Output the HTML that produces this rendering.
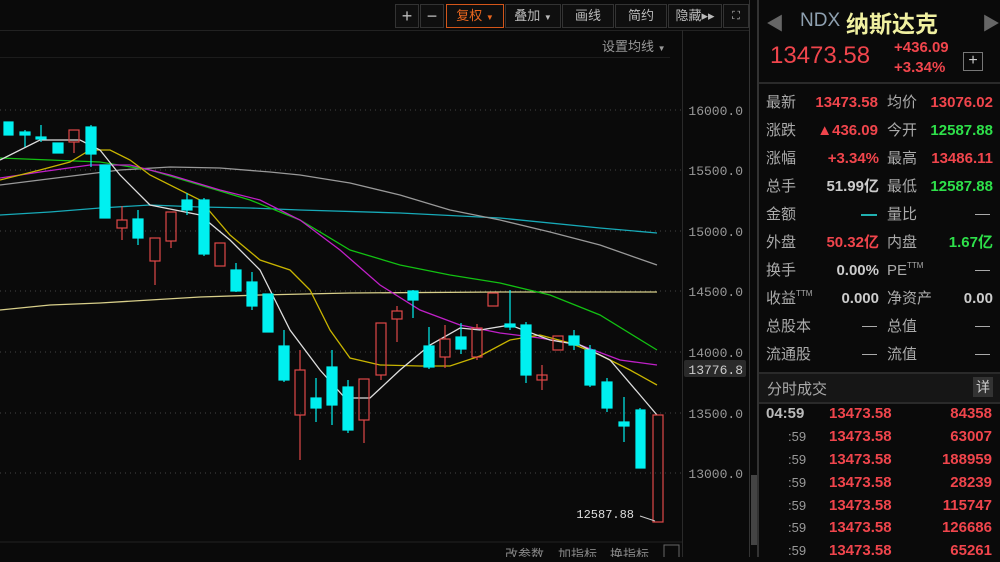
<!DOCTYPE html>
<html><head><meta charset="utf-8"><style>
*{margin:0;padding:0;box-sizing:border-box}
body{width:1000px;height:557px;background:#0a0a0a;overflow:hidden;position:relative;font-family:"Liberation Sans","Noto Sans CJK SC",sans-serif;color:#bbb}
.abs{position:absolute}
.tb{position:absolute;top:4px;height:24px;border:1px solid #333;background:#0f0f0f;color:#bbb;font-size:13px;line-height:22px;text-align:center}
.lbl{position:absolute;left:766px;font-size:15px;color:#aaa;line-height:20px;height:20px}
.val{position:absolute;font-size:15px;font-weight:bold;text-align:right;line-height:20px;height:20px;font-family:"Liberation Sans","Noto Sans CJK SC",sans-serif}
.r{color:#f0454c}.g{color:#2ee04a}.w{color:#ccc}
.tr{position:absolute;left:760px;width:232px;height:22px;font-size:15px;font-weight:bold;line-height:22px}
.tr span{line-height:22px}
.sup{font-size:8px;line-height:0;position:relative;top:-7px;vertical-align:baseline}
</style></head><body>
<div class="tb" style="left:395px;width:24px;font-size:18px">+</div>
<div class="tb" style="left:420px;width:24px;font-size:18px">−</div>
<div class="tb" style="left:446px;width:58px;border-color:#d4561a;color:#e8651e">复权 <span style="font-size:8px">▼</span></div>
<div class="tb" style="left:505px;width:56px">叠加 <span style="font-size:8px">▼</span></div>
<div class="tb" style="left:562px;width:52px">画线</div>
<div class="tb" style="left:615px;width:52px">简约</div>
<div class="tb" style="left:668px;width:54px">隐藏▸▸</div>
<div class="tb" style="left:723px;width:26px;font-size:11px">⛶</div>
<div class="abs" style="left:0;top:30px;width:750px;height:1px;background:#222"></div>
<div class="abs" style="left:0;top:57px;width:670px;height:1px;background:#1c1c1c"></div>
<div class="abs" style="left:602px;top:36px;font-size:13px;color:#999">设置均线 <span style="font-size:8px">▼</span></div>
<div class="abs" style="left:682px;top:30px;width:1px;height:527px;background:#2a2a2a"></div>
<div class="abs" style="left:749px;top:0;width:1px;height:557px;background:#333"></div>
<div class="abs" style="left:751px;top:475px;width:7px;height:70px;background:#444"></div>
<div class="abs" style="left:757px;top:0;width:2px;height:557px;background:#333"></div>
<svg class="abs" style="left:0;top:0" width="750" height="557">
<g stroke="#444" stroke-dasharray="1,4" stroke-width="1">
<line x1="0" y1="110" x2="685" y2="110"/><line x1="0" y1="170" x2="685" y2="170"/><line x1="0" y1="231" x2="685" y2="231"/><line x1="0" y1="291" x2="685" y2="291"/><line x1="0" y1="352" x2="685" y2="352"/><line x1="0" y1="413" x2="685" y2="413"/><line x1="0" y1="473" x2="685" y2="473"/>
</g>
<g font-family="Liberation Mono,monospace" font-size="13" fill="#999" text-anchor="end">
<text x="743" y="115">16000.0</text><text x="743" y="175">15500.0</text><text x="743" y="236">15000.0</text><text x="743" y="296">14500.0</text><text x="743" y="357">14000.0</text><text x="743" y="418">13500.0</text><text x="743" y="478">13000.0</text>
</g>
<rect x="684" y="360" width="62" height="17" rx="2" fill="#2a2a2a"/>
<text x="743" y="374" font-family="Liberation Mono,monospace" font-size="13" fill="#ccc" text-anchor="end">13776.8</text>
<g fill="none" stroke-width="1.3">
<polyline stroke="#d8cf8a" points="0,310 50,305 100,303 150,300 200,297 260,295 350,293 500,292 657,292"/>
<polyline stroke="#17aab8" points="0,215 50,212 100,208 150,205 200,207 250,208 300,210 400,213 500,218 600,228 657,233"/>
<polyline stroke="#999" points="0,185 40,180 80,175 120,170 170,167 220,168 270,172 300,175 350,183 400,195 450,210 500,220 550,232 600,245 657,265"/>
<polyline stroke="#12c012" points="0,158 50,160 100,162 150,170 200,185 250,200 300,220 350,250 400,265 450,275 500,283 550,295 600,315 657,350"/>
<polyline stroke="#c020c8" points="0,178 40,172 90,165 130,165 170,175 220,190 260,200 300,220 340,250 380,285 420,310 460,325 500,333 540,338 580,345 620,360 657,365"/>
<polyline stroke="#c8b400" points="0,180 40,170 70,162 90,150 110,150 130,160 150,175 200,200 230,235 260,260 290,270 310,290 330,330 350,358 380,365 420,366 450,366 480,356 510,340 540,335 570,343 600,355 630,370 657,385"/>
<polyline stroke="#ddd" points="0,160 40,140 80,140 100,150 120,175 150,205 200,215 230,240 260,270 290,330 320,370 345,398 370,398 400,370 430,345 460,328 480,330 510,325 550,340 580,345 610,360 640,395 657,415"/>
</g>
<g stroke-width="1.2">
<g fill="#00f0f0" stroke="#00f0f0">
<rect x="4" y="122" width="9" height="13"/><line x1="25" y1="130" x2="25" y2="147"/><rect x="20" y="132" width="10" height="3"/>
<line x1="41" y1="125" x2="41" y2="142"/><rect x="36" y="137" width="10" height="2"/>
<rect x="53" y="143" width="10" height="10"/><line x1="91" y1="125" x2="91" y2="167"/><rect x="86" y="127" width="10" height="27"/>
<rect x="100" y="165" width="10" height="53"/><line x1="138" y1="210" x2="138" y2="245"/><rect x="133" y="219" width="10" height="19"/>
<line x1="187" y1="193" x2="187" y2="215"/><rect x="182" y="200" width="10" height="10"/>
<line x1="204" y1="198" x2="204" y2="256"/><rect x="199" y="200" width="10" height="54"/>
<line x1="236" y1="263" x2="236" y2="292"/><rect x="231" y="270" width="10" height="21"/>
<line x1="252" y1="272" x2="252" y2="310"/><rect x="247" y="282" width="10" height="24"/>
<rect x="263" y="294" width="10" height="38"/><line x1="284" y1="330" x2="284" y2="382"/><rect x="279" y="346" width="10" height="34"/>
<line x1="316" y1="378" x2="316" y2="422"/><rect x="311" y="398" width="10" height="10"/>
<line x1="332" y1="350" x2="332" y2="425"/><rect x="327" y="367" width="10" height="38"/>
<line x1="348" y1="380" x2="348" y2="433"/><rect x="343" y="387" width="10" height="43"/>
<line x1="413" y1="290" x2="413" y2="318"/><rect x="408" y="291" width="10" height="9"/>
<line x1="429" y1="327" x2="429" y2="369"/><rect x="424" y="346" width="10" height="21"/>
<line x1="461" y1="323" x2="461" y2="354"/><rect x="456" y="337" width="10" height="12"/>
<line x1="510" y1="290" x2="510" y2="330"/><rect x="505" y="324" width="10" height="3"/>
<line x1="526" y1="322" x2="526" y2="383"/><rect x="521" y="325" width="10" height="50"/>
<line x1="574" y1="330" x2="574" y2="350"/><rect x="569" y="336" width="10" height="9"/>
<line x1="590" y1="345" x2="590" y2="387"/><rect x="585" y="350" width="10" height="35"/>
<line x1="607" y1="378" x2="607" y2="412"/><rect x="602" y="382" width="10" height="26"/>
<line x1="624" y1="397" x2="624" y2="442"/><rect x="619" y="422" width="10" height="4"/>
<line x1="640" y1="408" x2="640" y2="468"/><rect x="636" y="410" width="9" height="58"/>
</g>
<g fill="none" stroke="#e04848">
<rect x="69" y="130" width="10" height="12"/><line x1="74" y1="142" x2="74" y2="153"/>
<rect x="117" y="220" width="10" height="8"/><line x1="122" y1="206" x2="122" y2="220"/><line x1="122" y1="228" x2="122" y2="240"/>
<rect x="150" y="238" width="10" height="23"/><line x1="155" y1="261" x2="155" y2="285"/>
<rect x="166" y="212" width="10" height="29"/><line x1="171" y1="241" x2="171" y2="248"/>
<rect x="215" y="243" width="10" height="23"/>
<rect x="295" y="370" width="10" height="45"/><line x1="300" y1="350" x2="300" y2="370"/><line x1="300" y1="415" x2="300" y2="460"/>
<rect x="359" y="379" width="10" height="41"/><line x1="364" y1="420" x2="364" y2="443"/>
<rect x="376" y="323" width="10" height="52"/><line x1="381" y1="375" x2="381" y2="380"/>
<rect x="392" y="311" width="10" height="8"/><line x1="397" y1="306" x2="397" y2="311"/><line x1="397" y1="319" x2="397" y2="342"/>
<rect x="440" y="339" width="10" height="18"/><line x1="445" y1="325" x2="445" y2="339"/><line x1="445" y1="357" x2="445" y2="368"/>
<rect x="472" y="328" width="10" height="29"/><line x1="477" y1="324" x2="477" y2="328"/><line x1="477" y1="357" x2="477" y2="360"/>
<rect x="488" y="293" width="10" height="13"/>
<rect x="537" y="375" width="10" height="5"/><line x1="542" y1="365" x2="542" y2="390"/>
<rect x="553" y="336" width="10" height="14"/>
<rect x="653" y="415" width="10" height="107"/>
</g>
</g>
<line x1="640" y1="516" x2="655" y2="521" stroke="#ccc"/>
<text x="634" y="518" font-family="Liberation Mono,monospace" font-size="12" fill="#ddd" text-anchor="end">12587.88</text>
<line x1="0" y1="542" x2="682" y2="542" stroke="#222"/>
<g font-size="13" fill="#888" font-family="Liberation Sans,Noto Sans CJK SC,sans-serif">
<text x="505" y="559">改参数</text><text x="558" y="559">加指标</text><text x="610" y="559">换指标</text>
</g>
<rect x="664" y="545" width="15" height="14" fill="none" stroke="#666"/>
</svg>
<div class="abs" style="left:766px;top:10px;color:#666;font-size:18px">◀</div>
<div class="abs" style="left:982px;top:10px;color:#666;font-size:18px">▶</div>
<div class="abs" style="left:800px;top:10px;font-size:19px;color:#8ea0b0">NDX</div>
<div class="abs" style="left:846px;top:5px;font-size:23px;color:#f0f0a0;font-weight:bold">纳斯达克</div>
<div class="abs r" style="left:770px;top:42px;font-size:24px">13473.58</div>
<div class="abs r" style="left:894px;top:39px;font-size:15px;font-weight:bold">+436.09</div>
<div class="abs r" style="left:894px;top:59px;font-size:15px;font-weight:bold">+3.34%</div>
<div class="abs" style="left:963px;top:52px;width:20px;height:19px;border:1px solid #777;color:#ccc;font-size:16px;line-height:16px;text-align:center">+</div>
<div class="abs" style="left:759px;top:82px;width:241px;height:2px;background:#2a2a2a"></div>
<div class="lbl" style="top:93px">最新</div><div class="val r" style="left:800px;width:78px;top:93px">13473.58</div>
<div class="lbl" style="left:887px;top:93px">均价</div><div class="val r" style="left:910px;width:83px;top:93px">13076.02</div>
<div class="lbl" style="top:121px">涨跌</div><div class="val r" style="left:800px;width:78px;top:121px">▲436.09</div>
<div class="lbl" style="left:887px;top:121px">今开</div><div class="val g" style="left:910px;width:83px;top:121px">12587.88</div>
<div class="lbl" style="top:149px">涨幅</div><div class="val r" style="left:800px;width:79px;top:149px">+3.34%</div>
<div class="lbl" style="left:887px;top:149px">最高</div><div class="val r" style="left:910px;width:83px;top:149px">13486.11</div>
<div class="lbl" style="top:177px">总手</div><div class="val w" style="left:800px;width:79px;top:177px">51.99亿</div>
<div class="lbl" style="left:887px;top:177px">最低</div><div class="val g" style="left:910px;width:83px;top:177px">12587.88</div>
<div class="lbl" style="top:205px">金额</div><div class="abs" style="left:861px;top:214px;width:16px;height:2px;background:#20b0b0"></div>
<div class="lbl" style="left:887px;top:205px">量比</div><div class="abs" style="left:975px;top:214px;width:15px;height:1px;background:#aaa"></div>
<div class="lbl" style="top:233px">外盘</div><div class="val r" style="left:800px;width:79px;top:233px">50.32亿</div>
<div class="lbl" style="left:887px;top:233px">内盘</div><div class="val g" style="left:910px;width:83px;top:233px">1.67亿</div>
<div class="lbl" style="top:261px">换手</div><div class="val w" style="left:800px;width:79px;top:261px">0.00%</div>
<div class="lbl" style="left:887px;top:261px">PE<span class="sup">TTM</span></div><div class="abs" style="left:975px;top:270px;width:15px;height:1px;background:#aaa"></div>
<div class="lbl" style="top:289px">收益<span class="sup">TTM</span></div><div class="val w" style="left:800px;width:79px;top:289px">0.000</div>
<div class="lbl" style="left:887px;top:289px">净资产</div><div class="val w" style="left:910px;width:83px;top:289px">0.00</div>
<div class="lbl" style="top:317px">总股本</div><div class="abs" style="left:862px;top:326px;width:15px;height:1px;background:#aaa"></div>
<div class="lbl" style="left:887px;top:317px">总值</div><div class="abs" style="left:975px;top:326px;width:15px;height:1px;background:#aaa"></div>
<div class="lbl" style="top:345px">流通股</div><div class="abs" style="left:862px;top:354px;width:15px;height:1px;background:#aaa"></div>
<div class="lbl" style="left:887px;top:345px">流值</div><div class="abs" style="left:975px;top:354px;width:15px;height:1px;background:#aaa"></div>
<div class="abs" style="left:759px;top:372px;width:241px;height:32px;background:#161616;border-top:2px solid #2a2a2a;border-bottom:2px solid #2a2a2a"></div>
<div class="abs" style="left:767px;top:378px;font-size:15px;color:#aaa">分时成交</div>
<div class="abs" style="left:973px;top:377px;width:20px;height:20px;background:#333;color:#ccc;font-size:14px;text-align:center;line-height:20px">详</div>
<div class="tr" style="top:403px"><span class="abs" style="left:6px;color:#bbb">04:59</span><span class="abs r" style="left:69px">13473.58</span><span class="abs r" style="right:0">84358</span></div>
<div class="tr" style="top:426px"><span class="abs" style="left:28px;color:#999;font-weight:normal;font-size:13px">:59</span><span class="abs r" style="left:69px">13473.58</span><span class="abs r" style="right:0">63007</span></div>
<div class="tr" style="top:449px"><span class="abs" style="left:28px;color:#999;font-weight:normal;font-size:13px">:59</span><span class="abs r" style="left:69px">13473.58</span><span class="abs r" style="right:0">188959</span></div>
<div class="tr" style="top:472px"><span class="abs" style="left:28px;color:#999;font-weight:normal;font-size:13px">:59</span><span class="abs r" style="left:69px">13473.58</span><span class="abs r" style="right:0">28239</span></div>
<div class="tr" style="top:495px"><span class="abs" style="left:28px;color:#999;font-weight:normal;font-size:13px">:59</span><span class="abs r" style="left:69px">13473.58</span><span class="abs r" style="right:0">115747</span></div>
<div class="tr" style="top:517px"><span class="abs" style="left:28px;color:#999;font-weight:normal;font-size:13px">:59</span><span class="abs r" style="left:69px">13473.58</span><span class="abs r" style="right:0">126686</span></div>
<div class="tr" style="top:540px"><span class="abs" style="left:28px;color:#999;font-weight:normal;font-size:13px">:59</span><span class="abs r" style="left:69px">13473.58</span><span class="abs r" style="right:0">65261</span></div>
</body></html>
